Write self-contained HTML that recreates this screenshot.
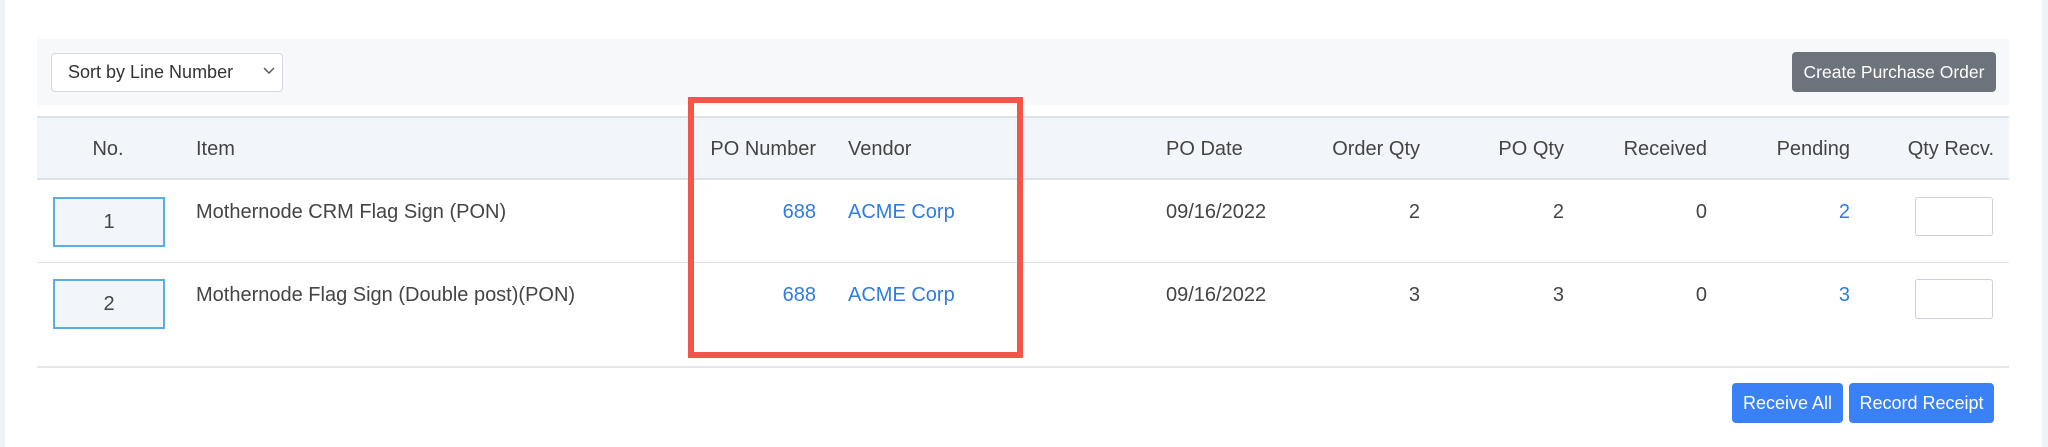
<!DOCTYPE html>
<html><head><style>
body{margin:0;width:2048px;height:447px;background:#fff;font-family:"Liberation Sans",sans-serif;color:#444;position:relative;overflow:hidden}
.a{position:absolute}
.t{position:absolute;font-size:20px;line-height:22px;white-space:nowrap}
.r{text-align:right}
.b{color:#2f7be0}
.btn{position:absolute;color:#fff;font-size:18px;border-radius:4px;display:flex;align-items:center;justify-content:center;white-space:nowrap}
</style></head><body>
<div class="a" style="left:0;top:0;width:5px;height:447px;background:#eef1f6"></div>
<div class="a" style="left:2042px;top:0;width:6px;height:447px;background:#eef1f6"></div>
<div class="a" style="left:37px;top:39px;width:1972px;height:66px;background:#f6f8fa"></div>
<div class="a" style="left:51px;top:53px;width:230px;height:37px;border:1px solid #d4d8dd;border-radius:4px;background:#fff"></div>
<div class="t" style="left:68px;top:61px;font-size:18px;color:#333">Sort by Line Number</div>
<svg class="a" style="left:263px;top:67px" width="12" height="8"><path d="M1 1l5 5 5-5" stroke="#555" stroke-width="1.4" fill="none"/></svg>
<div class="btn" style="left:1792px;top:52px;width:204px;height:40px;background:#6c737a;font-size:17.5px">Create Purchase Order</div>
<div class="a" style="left:37px;top:116px;width:1972px;height:64px;background:#f2f6fa;border-top:2px solid #dde2e8;border-bottom:2px solid #dde2e8;box-sizing:border-box"></div>
<div class="t" style="left:83px;top:138px;width:50px;text-align:center">No.</div>
<div class="t" style="left:196px;top:138px">Item</div>
<div class="t r" style="left:616px;top:138px;width:200px">PO Number</div>
<div class="t" style="left:848px;top:138px">Vendor</div>
<div class="t" style="left:1166px;top:138px">PO Date</div>
<div class="t r" style="left:1220px;top:138px;width:200px">Order Qty</div>
<div class="t r" style="left:1364px;top:138px;width:200px">PO Qty</div>
<div class="t r" style="left:1507px;top:138px;width:200px">Received</div>
<div class="t r" style="left:1650px;top:138px;width:200px">Pending</div>
<div class="t r" style="left:1794px;top:138px;width:200px">Qty Recv.</div>
<div class="a" style="left:37px;top:262px;width:1972px;height:1px;background:#dfe3e8"></div>
<div class="a" style="left:37px;top:366px;width:1972px;height:2px;background:#e3e7ec"></div>
<div class="a" style="left:53px;top:197px;width:108px;height:46px;border:2px solid #5aaede;background:#f2f6fa;font-size:20px;display:flex;align-items:center;justify-content:center">1</div>
<div class="t" style="left:196px;top:201px">Mothernode CRM Flag Sign (PON)</div>
<div class="t r b" style="left:616px;top:201px;width:200px">688</div>
<div class="t b" style="left:848px;top:201px">ACME Corp</div>
<div class="t" style="left:1166px;top:201px">09/16/2022</div>
<div class="t r" style="left:1220px;top:201px;width:200px">2</div>
<div class="t r" style="left:1364px;top:201px;width:200px">2</div>
<div class="t r" style="left:1507px;top:201px;width:200px">0</div>
<div class="t r b" style="left:1650px;top:201px;width:200px">2</div>
<div class="a" style="left:1915px;top:197px;width:76px;height:37px;border:1px solid #ccd1d7;border-radius:3px"></div>
<div class="a" style="left:53px;top:279px;width:108px;height:46px;border:2px solid #5aaede;background:#f2f6fa;font-size:20px;display:flex;align-items:center;justify-content:center">2</div>
<div class="t" style="left:196px;top:284px">Mothernode Flag Sign (Double post)(PON)</div>
<div class="t r b" style="left:616px;top:284px;width:200px">688</div>
<div class="t b" style="left:848px;top:284px">ACME Corp</div>
<div class="t" style="left:1166px;top:284px">09/16/2022</div>
<div class="t r" style="left:1220px;top:284px;width:200px">3</div>
<div class="t r" style="left:1364px;top:284px;width:200px">3</div>
<div class="t r" style="left:1507px;top:284px;width:200px">0</div>
<div class="t r b" style="left:1650px;top:284px;width:200px">3</div>
<div class="a" style="left:1915px;top:279px;width:76px;height:38px;border:1px solid #ccd1d7;border-radius:3px"></div>
<div class="a" style="left:688px;top:97px;width:335px;height:261px;border:6px solid #f2554a;box-sizing:border-box"></div>
<div class="btn" style="left:1732px;top:383px;width:111px;height:40px;background:#3a80f6">Receive All</div>
<div class="btn" style="left:1849px;top:383px;width:145px;height:40px;background:#3a80f6">Record Receipt</div>
</body></html>
